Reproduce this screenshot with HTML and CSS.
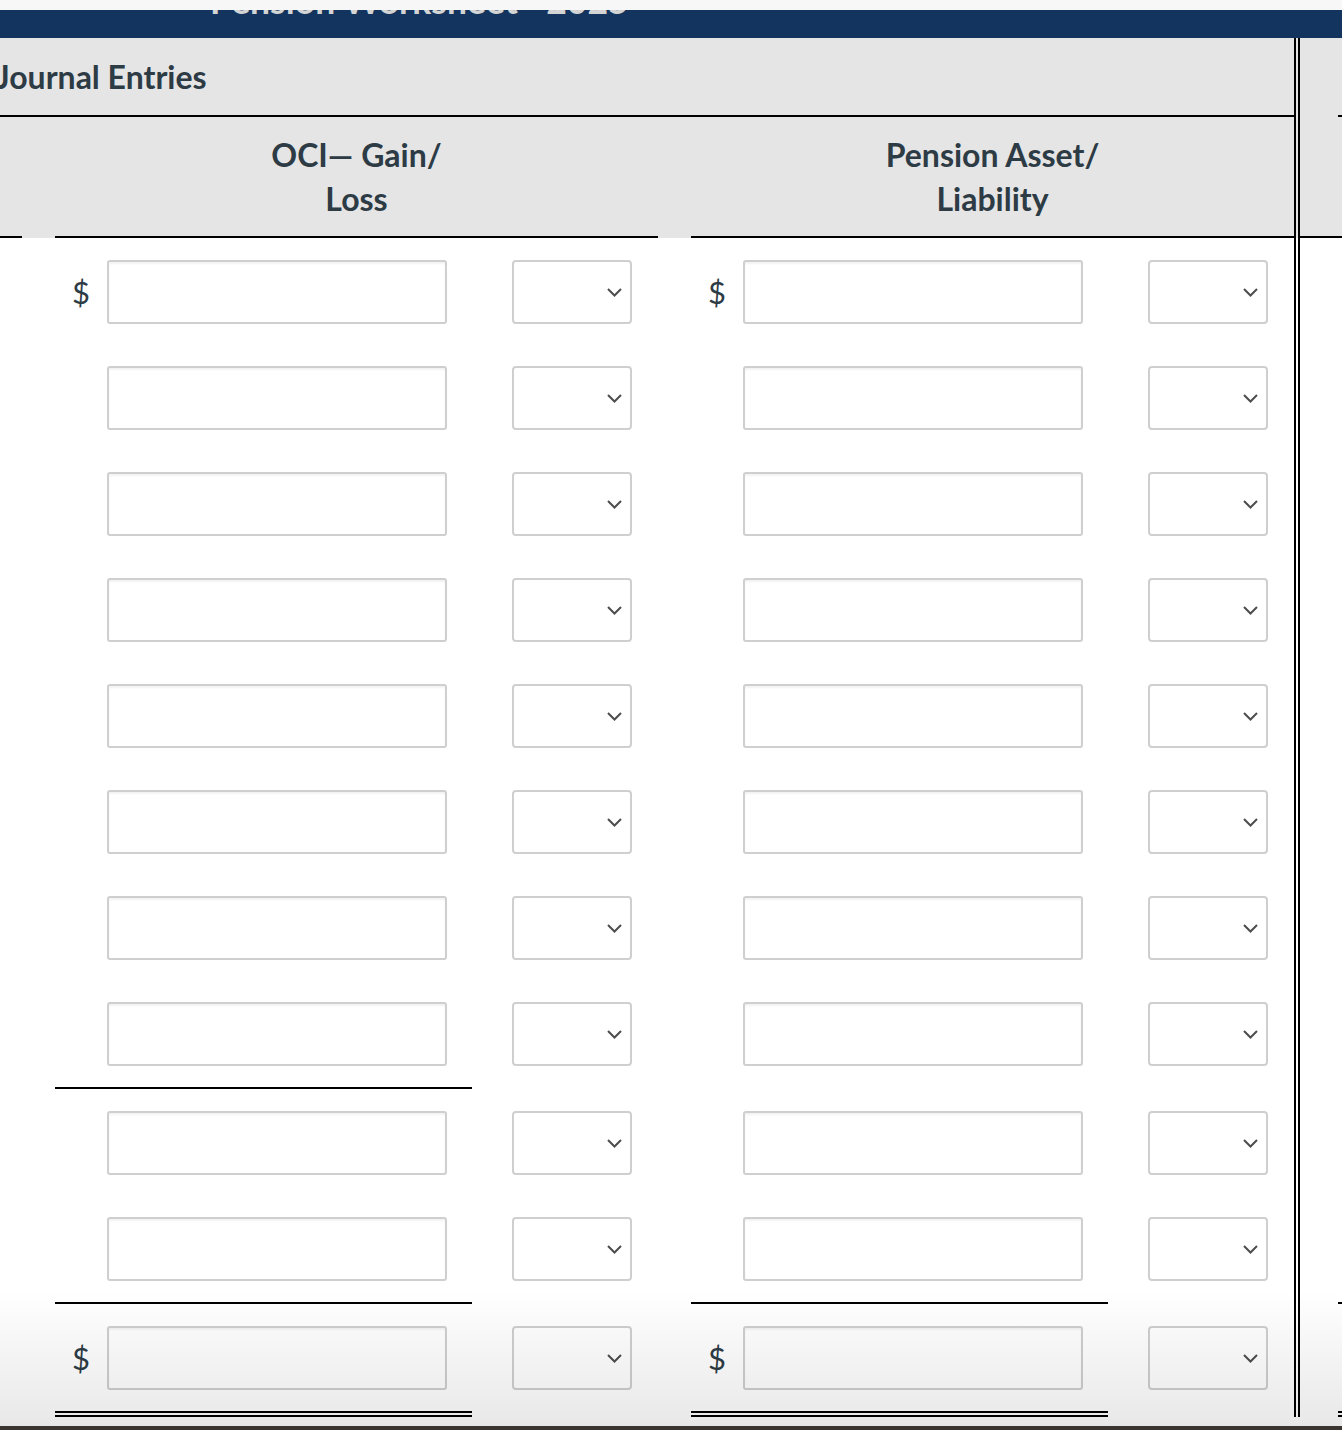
FILE: index.html
```html
<!DOCTYPE html>
<html lang="en">
<head>
<meta charset="utf-8">
<title>Pension Worksheet—2025</title>
<link rel="stylesheet" href="styles.css">
</head>
<body>
<div class="page">
  <div class="chrome-top"></div>
  <header class="banner"><h1 class="banner-title">Pension Worksheet—2025</h1></header>
  <div class="sheet">
    <div class="cap-main"><h2 class="cap-text">Journal Entries</h2></div>
    <div class="cap-tail"><div class="cap-rule"></div></div>

    <div class="hd-edge"><div class="hd-rule"></div></div>
    <div class="hd-col"><div class="hd-text">OCI— Gain/<br>Loss</div></div>
    <div class="hd-col hd-last"><div class="hd-text">Pension Asset/<br>Liability</div></div>
    <div class="hd-tail"><div class="hd-rule"></div></div>

    <!-- row 1 -->
    <div class="edge"></div>
    <div class="entry"><div class="amt"><span class="cur">$</span><input class="num" type="text"></div><div class="dir"><div class="pick"><svg width="15" height="9" viewBox="0 0 15 9"><polyline points="1,1 7.5,7.5 14,1" fill="none" stroke="#4d4d4d" stroke-width="2"/></svg></div></div></div>
    <div class="entry last"><div class="amt"><span class="cur">$</span><input class="num" type="text"></div><div class="dir"><div class="pick"><svg width="15" height="9" viewBox="0 0 15 9"><polyline points="1,1 7.5,7.5 14,1" fill="none" stroke="#4d4d4d" stroke-width="2"/></svg></div></div></div>
    <div class="tail"></div>

    <!-- row 2 -->
    <div class="edge"></div>
    <div class="entry"><div class="amt"><span class="cur"></span><input class="num" type="text"></div><div class="dir"><div class="pick"><svg width="15" height="9" viewBox="0 0 15 9"><polyline points="1,1 7.5,7.5 14,1" fill="none" stroke="#4d4d4d" stroke-width="2"/></svg></div></div></div>
    <div class="entry last"><div class="amt"><span class="cur"></span><input class="num" type="text"></div><div class="dir"><div class="pick"><svg width="15" height="9" viewBox="0 0 15 9"><polyline points="1,1 7.5,7.5 14,1" fill="none" stroke="#4d4d4d" stroke-width="2"/></svg></div></div></div>
    <div class="tail"></div>

    <!-- row 3 -->
    <div class="edge"></div>
    <div class="entry"><div class="amt"><span class="cur"></span><input class="num" type="text"></div><div class="dir"><div class="pick"><svg width="15" height="9" viewBox="0 0 15 9"><polyline points="1,1 7.5,7.5 14,1" fill="none" stroke="#4d4d4d" stroke-width="2"/></svg></div></div></div>
    <div class="entry last"><div class="amt"><span class="cur"></span><input class="num" type="text"></div><div class="dir"><div class="pick"><svg width="15" height="9" viewBox="0 0 15 9"><polyline points="1,1 7.5,7.5 14,1" fill="none" stroke="#4d4d4d" stroke-width="2"/></svg></div></div></div>
    <div class="tail"></div>

    <!-- row 4 -->
    <div class="edge"></div>
    <div class="entry"><div class="amt"><span class="cur"></span><input class="num" type="text"></div><div class="dir"><div class="pick"><svg width="15" height="9" viewBox="0 0 15 9"><polyline points="1,1 7.5,7.5 14,1" fill="none" stroke="#4d4d4d" stroke-width="2"/></svg></div></div></div>
    <div class="entry last"><div class="amt"><span class="cur"></span><input class="num" type="text"></div><div class="dir"><div class="pick"><svg width="15" height="9" viewBox="0 0 15 9"><polyline points="1,1 7.5,7.5 14,1" fill="none" stroke="#4d4d4d" stroke-width="2"/></svg></div></div></div>
    <div class="tail"></div>

    <!-- row 5 -->
    <div class="edge"></div>
    <div class="entry"><div class="amt"><span class="cur"></span><input class="num" type="text"></div><div class="dir"><div class="pick"><svg width="15" height="9" viewBox="0 0 15 9"><polyline points="1,1 7.5,7.5 14,1" fill="none" stroke="#4d4d4d" stroke-width="2"/></svg></div></div></div>
    <div class="entry last"><div class="amt"><span class="cur"></span><input class="num" type="text"></div><div class="dir"><div class="pick"><svg width="15" height="9" viewBox="0 0 15 9"><polyline points="1,1 7.5,7.5 14,1" fill="none" stroke="#4d4d4d" stroke-width="2"/></svg></div></div></div>
    <div class="tail"></div>

    <!-- row 6 -->
    <div class="edge"></div>
    <div class="entry"><div class="amt"><span class="cur"></span><input class="num" type="text"></div><div class="dir"><div class="pick"><svg width="15" height="9" viewBox="0 0 15 9"><polyline points="1,1 7.5,7.5 14,1" fill="none" stroke="#4d4d4d" stroke-width="2"/></svg></div></div></div>
    <div class="entry last"><div class="amt"><span class="cur"></span><input class="num" type="text"></div><div class="dir"><div class="pick"><svg width="15" height="9" viewBox="0 0 15 9"><polyline points="1,1 7.5,7.5 14,1" fill="none" stroke="#4d4d4d" stroke-width="2"/></svg></div></div></div>
    <div class="tail"></div>

    <!-- row 7 -->
    <div class="edge"></div>
    <div class="entry"><div class="amt"><span class="cur"></span><input class="num" type="text"></div><div class="dir"><div class="pick"><svg width="15" height="9" viewBox="0 0 15 9"><polyline points="1,1 7.5,7.5 14,1" fill="none" stroke="#4d4d4d" stroke-width="2"/></svg></div></div></div>
    <div class="entry last"><div class="amt"><span class="cur"></span><input class="num" type="text"></div><div class="dir"><div class="pick"><svg width="15" height="9" viewBox="0 0 15 9"><polyline points="1,1 7.5,7.5 14,1" fill="none" stroke="#4d4d4d" stroke-width="2"/></svg></div></div></div>
    <div class="tail"></div>

    <!-- row 8 -->
    <div class="edge"></div>
    <div class="entry"><div class="amt rule"><span class="cur"></span><input class="num" type="text"></div><div class="dir"><div class="pick"><svg width="15" height="9" viewBox="0 0 15 9"><polyline points="1,1 7.5,7.5 14,1" fill="none" stroke="#4d4d4d" stroke-width="2"/></svg></div></div></div>
    <div class="entry last"><div class="amt"><span class="cur"></span><input class="num" type="text"></div><div class="dir"><div class="pick"><svg width="15" height="9" viewBox="0 0 15 9"><polyline points="1,1 7.5,7.5 14,1" fill="none" stroke="#4d4d4d" stroke-width="2"/></svg></div></div></div>
    <div class="tail"></div>

    <!-- row 9 -->
    <div class="edge"></div>
    <div class="entry"><div class="amt"><span class="cur"></span><input class="num" type="text"></div><div class="dir"><div class="pick"><svg width="15" height="9" viewBox="0 0 15 9"><polyline points="1,1 7.5,7.5 14,1" fill="none" stroke="#4d4d4d" stroke-width="2"/></svg></div></div></div>
    <div class="entry last"><div class="amt"><span class="cur"></span><input class="num" type="text"></div><div class="dir"><div class="pick"><svg width="15" height="9" viewBox="0 0 15 9"><polyline points="1,1 7.5,7.5 14,1" fill="none" stroke="#4d4d4d" stroke-width="2"/></svg></div></div></div>
    <div class="tail"></div>

    <!-- row 10 -->
    <div class="edge"></div>
    <div class="entry"><div class="amt rule"><span class="cur"></span><input class="num" type="text"></div><div class="dir"><div class="pick"><svg width="15" height="9" viewBox="0 0 15 9"><polyline points="1,1 7.5,7.5 14,1" fill="none" stroke="#4d4d4d" stroke-width="2"/></svg></div></div></div>
    <div class="entry last"><div class="amt rule"><span class="cur"></span><input class="num" type="text"></div><div class="dir"><div class="pick"><svg width="15" height="9" viewBox="0 0 15 9"><polyline points="1,1 7.5,7.5 14,1" fill="none" stroke="#4d4d4d" stroke-width="2"/></svg></div></div></div>
    <div class="tail"><div class="tail-mark"></div></div>

    <!-- row 11 -->
    <div class="edge"></div>
    <div class="entry"><div class="amt total"><span class="cur">$</span><input class="num" type="text"></div><div class="dir"><div class="pick"><svg width="15" height="9" viewBox="0 0 15 9"><polyline points="1,1 7.5,7.5 14,1" fill="none" stroke="#4d4d4d" stroke-width="2"/></svg></div></div></div>
    <div class="entry last"><div class="amt total"><span class="cur">$</span><input class="num" type="text"></div><div class="dir"><div class="pick"><svg width="15" height="9" viewBox="0 0 15 9"><polyline points="1,1 7.5,7.5 14,1" fill="none" stroke="#4d4d4d" stroke-width="2"/></svg></div></div></div>
    <div class="tail"><div class="tail-mark total"></div></div>
  </div>
  <div class="chrome-bottom"></div>
</div>
</body>
</html>
```
FILE: styles.css
```css
* { box-sizing: border-box; }
html, body { margin: 0; padding: 0; }
body {
  background: #fff;
  font-family: Lato, "Open Sans", "Liberation Sans", sans-serif;
  color: #2d3b45;
  overflow: hidden;
}
.page {
  position: relative;
  width: 1342px;
  height: 1430px;
  overflow: hidden;
}
.chrome-top {
  position: absolute;
  top: 0; left: 0; right: 0;
  height: 10px;
  background: #f7f7f7;
  z-index: 2;
}
.banner {
  height: 38px;
  background: #13345e;
  overflow: hidden;
  padding-left: 210px;
}
.banner-title {
  margin: -18px 0 0;
  font-size: 35.5px;
  line-height: 38px;
  font-weight: 700;
  color: #d4d4d4;
  white-space: nowrap;
}
.sheet {
  display: grid;
  grid-template-columns: 39px 636px 625px 42px;
}
.cap-main {
  grid-column: 1 / 4;
  background: #e5e5e5;
  border-right: 6px double #000;
  overflow: hidden;
}
.cap-text {
  margin: 0;
  padding: 17px 0 16px;
  font-size: 32px;
  line-height: 44px;
  font-weight: 700;
  border-bottom: 2px solid #000;
  text-indent: -4px;
  white-space: nowrap;
}
.cap-tail {
  background: #e5e5e5;
  padding-left: 38px;
  display: flex;
  flex-direction: column;
}
.cap-rule { flex: 1; border-bottom: 2px solid #000; }

.hd-edge {
  background: #e5e5e5;
  padding-right: 17px;
  display: flex;
  flex-direction: column;
}
.hd-rule { flex: 1; border-bottom: 2px solid #000; }
.hd-col {
  background: #e5e5e5;
  padding: 0 17px 0 16px;
}
.hd-col.hd-last {
  padding-right: 0;
  border-right: 6px double #000;
}
.hd-text {
  padding: 16px 0 15px;
  font-size: 32px;
  line-height: 44px;
  font-weight: 700;
  text-align: center;
  border-bottom: 2px solid #000;
}
.hd-tail {
  background: #e5e5e5;
  display: flex;
  flex-direction: column;
}

.entry {
  display: flex;
  align-items: flex-start;
  padding: 0 17px 0 16px;
}
.entry.last {
  padding-right: 0;
  border-right: 6px double #000;
}
.amt {
  width: 417px;
  flex: none;
  display: flex;
  align-items: center;
  padding: 22px 25px 20px 18px;
}
.amt.rule { padding-bottom: 21px; border-bottom: 2px solid #000; }
.amt.total { padding-bottom: 21px; border-bottom: 6px double #000; }
.cur {
  width: 34px;
  flex: none;
  font-size: 31px;
  line-height: 60px;
  font-weight: 400;
  color: #2d3b45;
  margin-left: -1px;
  margin-right: 1px;
}
.num {
  width: 340px;
  height: 64px;
  flex: none;
  border: 2px solid #cfcfcf;
  border-radius: 3px;
  box-shadow: inset 0 2px 2px rgba(0, 0, 0, 0.05);
  background: #fff;
  font: inherit;
  font-size: 24px;
  padding: 0 10px;
  outline: none;
}
.dir {
  width: 186px;
  flex: none;
  padding: 22px 25px 0 40px;
}
.pick {
  width: 120px;
  height: 64px;
  border: 2px solid #cfcfcf;
  border-radius: 4px;
  background: #fff;
  display: flex;
  align-items: center;
  justify-content: flex-end;
  padding-right: 8px;
}
.pick svg { display: block; }
.tail { padding-left: 38px; }
.tail-mark { height: 109px; border-bottom: 2px solid #000; }
.tail-mark.total { height: 113px; border-bottom: 6px double #000; }

.chrome-bottom {
  position: absolute;
  left: 0; right: 0; bottom: 0;
  height: 140px;
  background: linear-gradient(to bottom, rgba(0, 0, 0, 0) 0, rgba(0, 0, 0, 0.09) 136px, #3a3531 136px);
  pointer-events: none;
  z-index: 3;
}
```
